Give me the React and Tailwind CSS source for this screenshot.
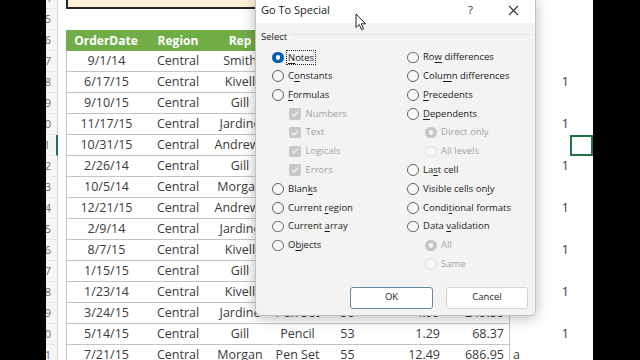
import React from 'react';

const data = [
  ['9/1/14', 'Central', 'Smith', 'Desk', '2', '125.00', '250.00'],
  ['6/17/15', 'Central', 'Kivell', 'Desk', '5', '125.00', '625.00'],
  ['9/10/15', 'Central', 'Gill', 'Pencil', '7', '1.29', '9.03'],
  ['11/17/15', 'Central', 'Jardine', 'Binder', '11', '4.99', '54.89'],
  ['10/31/15', 'Central', 'Andrews', 'Pencil', '14', '1.29', '18.06'],
  ['2/26/14', 'Central', 'Gill', 'Pen', '27', '19.99', '539.73'],
  ['10/5/14', 'Central', 'Morgan', 'Binder', '28', '8.99', '251.72'],
  ['12/21/15', 'Central', 'Andrews', 'Binder', '28', '4.99', '139.72'],
  ['2/9/14', 'Central', 'Jardine', 'Pencil', '36', '4.99', '179.64'],
  ['8/7/15', 'Central', 'Kivell', 'Pen Set', '42', '23.95', '1,005.90'],
  ['1/15/15', 'Central', 'Gill', 'Binder', '46', '8.99', '413.54'],
  ['1/23/14', 'Central', 'Kivell', 'Binder', '50', '19.99', '999.50'],
  ['3/24/15', 'Central', 'Jardine', 'Pen Set', '50', '4.99', '249.50'],
  ['5/14/15', 'Central', 'Gill', 'Pencil', '53', '1.29', '68.37'],
  ['7/21/15', 'Central', 'Morgan', 'Pen Set', '55', '12.49', '686.95'],
];

const headers = ['OrderDate', 'Region', 'Rep', 'Item', 'Units', 'UnitCost', 'Total'];

// table column widths (OrderDate .. Total) and alignment
const tableCols = [
  { w: 'w-[80px]', align: 'justify-center' },
  { w: 'w-[64px]', align: 'justify-center' },
  { w: 'w-[60px]', align: 'justify-center' },
  { w: 'w-[55px]', align: 'justify-center' },
  { w: 'w-[45px]', align: 'justify-center' },
  { w: 'w-[75px]', align: 'justify-end pr-[5px]' },
  { w: 'w-[65px]', align: 'justify-end pr-[5px]' },
];

function RowHeader({ n, active }) {
  return (
    <div
      className={`w-[12px] shrink-0 h-full flex items-center justify-end overflow-hidden pr-[6px] bg-[#f5f5f5] border-b border-[#e6e6e6] text-[11px] text-[#6b6b6b] ${
        active ? 'border-r-2 border-r-[#217346]' : 'border-r border-r-[#cfcfcf]'
      }`}
    >
      <span className="whitespace-nowrap">{n}</span>
    </div>
  );
}

function Blank({ className = '', children }) {
  return <div className={`h-full shrink-0 flex items-center overflow-hidden ${className}`}>{children}</div>;
}

function TrailingCells({ j, k, selected }) {
  return (
    <>
      <Blank className="w-[35px] pl-[3px]">{j}</Blank>
      <Blank className="w-[25px] justify-end pr-[1px]">{k}</Blank>
      <div className={`w-[23px] h-full shrink-0 ${selected ? 'border-2 border-[#217346]' : ''}`} />
    </>
  );
}

function Sheet() {
  return (
    <div className="flex flex-col -mt-[12px] text-[12.5px] text-[#3a3a3a]">
      {/* row 4: title banner */}
      <div className="flex h-[21px]">
        <RowHeader n={4} />
        <Blank className="w-[8px]" />
        <div className="w-[444px] h-full shrink-0 bg-[#fdf0d4] border-2 border-[#262626] overflow-hidden">
          <div className="pl-[170px] -mt-[6px] text-[19px] leading-[19px] font-bold text-[#1f1f1f] whitespace-nowrap">
            NOTES REPORT
          </div>
        </div>
        <TrailingCells />
      </div>
      {/* row 5: empty */}
      <div className="flex h-[21px]">
        <RowHeader n={5} />
        <Blank className="w-[8px]" />
        {tableCols.map((c, i) => (
          <Blank key={i} className={c.w} />
        ))}
        <TrailingCells />
      </div>
      {/* row 6: table header */}
      <div className="flex h-[21px]">
        <RowHeader n={6} />
        <Blank className="w-[8px]" />
        {headers.map((h, i) => (
          <div
            key={h}
            className={`${tableCols[i].w} ${tableCols[i].align} h-full shrink-0 flex items-center bg-[#70ad47] text-white font-bold text-[12px] ${
              i === 6 ? 'border-r border-[#c4c4c4]' : ''
            }`}
          >
            {h}
          </div>
        ))}
        <TrailingCells />
      </div>
      {data.map((row, r) => {
        const n = r + 7;
        return (
          <div key={n} className="flex h-[21px]">
            <RowHeader n={n} active={n === 11} />
            <Blank className="w-[8px]" />
            {row.map((v, i) => (
              <div
                key={i}
                className={`${tableCols[i].w} ${tableCols[i].align} h-full shrink-0 flex items-center bg-white border-b border-[#c4c4c4] whitespace-nowrap overflow-hidden ${
                  i === 0 ? 'border-l border-l-[#c4c4c4]' : ''
                } ${i === 6 ? 'border-r border-r-[#c4c4c4]' : ''}`}
              >
                {v}
              </div>
            ))}
            <TrailingCells j={n === 21 ? 'a' : ''} k={n % 2 === 0 ? '1' : ''} selected={n === 11} />
          </div>
        );
      })}
    </div>
  );
}

function Label({ text, ul, disabled }) {
  if (ul === undefined || ul < 0) return <span>{text}</span>;
  return (
    <span>
      {text.slice(0, ul)}
      <span className={disabled ? '' : 'underline underline-offset-[1.5px]'}>{text[ul]}</span>
      {text.slice(ul + 1)}
    </span>
  );
}

function Radio({ state }) {
  if (state === 'on')
    return (
      <span className="w-[11.5px] h-[11.5px] rounded-full bg-[#005fb8] flex items-center justify-center shrink-0">
        <span className="w-[4.5px] h-[4.5px] rounded-full bg-white" />
      </span>
    );
  if (state === 'dis-on')
    return (
      <span className="w-[11.5px] h-[11.5px] rounded-full bg-[#c6c6c6] flex items-center justify-center shrink-0">
        <span className="w-[4.5px] h-[4.5px] rounded-full bg-[#f6f6f6]" />
      </span>
    );
  if (state === 'dis-off')
    return <span className="w-[11.5px] h-[11.5px] rounded-full bg-[#f7f7f7] border border-[#dcdcdc] shrink-0" />;
  return <span className="w-[11.5px] h-[11.5px] rounded-full bg-[#f8f8f8] border border-[#616161] shrink-0" />;
}

function CheckDisabled() {
  return (
    <span className="w-[11.5px] h-[11.5px] rounded-[2px] bg-[#c8c8c8] flex items-center justify-center shrink-0">
      <svg width="8" height="8" viewBox="0 0 8 8" fill="none">
        <path d="M1.2 4.2 L3.1 6 L6.8 1.9" stroke="#f4f4f4" strokeWidth="1.2" strokeLinecap="round" strokeLinejoin="round" />
      </svg>
    </span>
  );
}

const leftOptions = [
  { t: 'Notes', ul: 0, s: 'on', focus: true },
  { t: 'Constants', ul: 1 },
  { t: 'Formulas', ul: 0 },
  { t: 'Numbers', check: true },
  { t: 'Text', check: true },
  { t: 'Logicals', check: true },
  { t: 'Errors', check: true },
  { t: 'Blanks', ul: 4 },
  { t: 'Current region', ul: 8 },
  { t: 'Current array', ul: 8 },
  { t: 'Objects', ul: 1 },
];

const rightOptions = [
  { t: 'Row differences', ul: 2 },
  { t: 'Column differences', ul: 4 },
  { t: 'Precedents', ul: 0 },
  { t: 'Dependents', ul: 0 },
  { t: 'Direct only', sub: true, s: 'dis-on' },
  { t: 'All levels', sub: true, s: 'dis-off' },
  { t: 'Last cell', ul: 2 },
  { t: 'Visible cells only', ul: 16 },
  { t: 'Conditional formats', ul: 5 },
  { t: 'Data validation', ul: 5 },
  { t: 'All', sub: true, s: 'dis-on' },
  { t: 'Same', sub: true, s: 'dis-off' },
];

function Option({ o }) {
  if (o.check) {
    return (
      <div className="h-[18.8px] flex items-center gap-[5px] pl-[17px] text-[#a3a3a3]">
        <CheckDisabled />
        <span>{o.t}</span>
      </div>
    );
  }
  const disabled = o.s === 'dis-on' || o.s === 'dis-off';
  return (
    <div className={`h-[18.8px] flex items-center gap-[4.5px] ${o.sub ? 'pl-[18px]' : ''} ${disabled ? 'text-[#a3a3a3]' : 'text-[#1b1b1b]'}`}>
      <Radio state={o.s || 'off'} />
      <span className={o.focus ? 'outline outline-1 outline-dotted outline-[#222] px-[1px] -ml-[1px] leading-[13px]' : ''}>
        <Label text={o.t} ul={disabled ? -1 : o.ul} disabled={disabled} />
      </span>
    </div>
  );
}

function Dialog() {
  return (
    <div className="absolute left-[255px] top-[-2px] w-[281px] h-[318px] bg-[#f3f3f3] border border-[#c2c2c2] rounded-b-[6px] shadow-[0_2px_14px_rgba(0,0,0,0.28)] flex flex-col font-['Open_Sans',sans-serif] text-[9.5px]">
      <div className="h-[24px] bg-white flex items-center shrink-0 pb-[2px]">
        <div className="flex-1 pl-[5px] text-[11px] text-[#1b1b1b]">Go To Special</div>
        <div className="w-[43px] h-full flex items-center justify-center text-[11.5px] text-[#333]">?</div>
        <div className="w-[43px] h-full flex items-center justify-center">
          <svg width="11" height="11" viewBox="0 0 11 11">
            <path d="M1 1 L10 10 M10 1 L1 10" stroke="#333" strokeWidth="1.1" />
          </svg>
        </div>
      </div>
      <div className="flex items-center h-[22px] pl-[5px] pr-[4px] pt-[6px] text-[#1b1b1b]">
        <span>Select</span>
        <div className="flex-1 h-px bg-[#e2e2e2] ml-[4px] -mt-[5px]" />
      </div>
      <div className="flex pt-[3px]">
        <div className="w-[151px] pl-[16px] flex flex-col">
          {leftOptions.map((o) => (
            <Option key={o.t} o={o} />
          ))}
        </div>
        <div className="flex-1 flex flex-col">
          {rightOptions.map((o) => (
            <Option key={o.t} o={o} />
          ))}
        </div>
      </div>
      <div className="flex justify-end gap-[13px] pr-[7px] mt-[13px] text-[#1b1b1b]">
        <button className="w-[83px] h-[22px] bg-white rounded-[3px] border-[1.5px] border-[#6a85a1] flex items-center justify-center">
          OK
        </button>
        <button className="w-[82px] h-[22px] bg-white rounded-[3px] border border-[#d3d3d3] flex items-center justify-center">
          Cancel
        </button>
      </div>
    </div>
  );
}

export default function App() {
  return (
    <div className="relative w-[640px] h-[360px] overflow-hidden flex bg-black font-['Open_Sans',sans-serif]">
      <div className="w-[46px] shrink-0 bg-black" />
      <div className="w-[547px] shrink-0 h-full bg-white overflow-hidden">
        <Sheet />
      </div>
      <div className="flex-1 bg-black" />
      <Dialog />
      <svg className="absolute left-[355px] top-[13px]" width="12" height="18" viewBox="0 0 12 18">
        <path d="M1 1 L1 14.5 L4.2 11.5 L6.6 16.6 L8.6 15.7 L6.3 10.8 L10.6 10.8 Z" fill="white" stroke="#222" strokeWidth="1" strokeLinejoin="round" />
      </svg>
    </div>
  );
}
